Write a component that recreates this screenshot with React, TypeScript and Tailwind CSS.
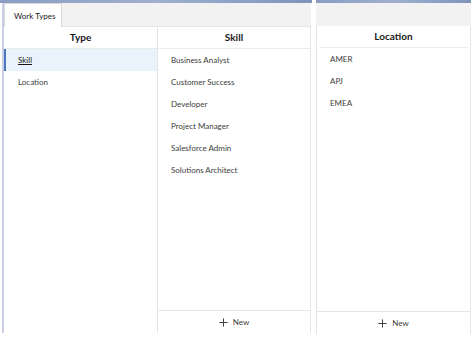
const skills = [
  "Business Analyst",
  "Customer Success",
  "Developer",
  "Project Manager",
  "Salesforce Admin",
  "Solutions Architect",
];

const locations = ["AMER", "APJ", "EMEA"];

const PlusIcon = () => (
  <svg width="9" height="9" viewBox="0 0 10 10" className="text-[#3e3e3c]">
    <path d="M5 0.5v9M0.5 5h9" stroke="currentColor" strokeWidth="1.1" />
  </svg>
);

const NewButton = () => (
  <div className="h-[22px] flex items-center justify-center gap-[5px] text-[8px] text-[#3e3e3c]">
    <PlusIcon />
    <span>New</span>
  </div>
);

const App = () => {
  return (
    <div
      className="w-[474px] h-[349px] bg-white flex overflow-hidden"
      style={{ fontFamily: "Lato, 'Open Sans', sans-serif" }}
    >
      {/* left window */}
      <div className="w-[312px] h-[333px] flex flex-col">
        <div className="h-[3px] bg-gradient-to-r from-[#8a9cc2] via-[#9fb0d0] to-[#7f93bb]" />
        <div className="flex-1 flex pl-[2px] pr-[1px]">
          <div className="w-[2px] bg-[#c9cde6]" />
          <div className="flex-1 flex flex-col">
            {/* tab bar */}
            <div className="h-[24px] bg-[#f3f2f2] flex border-b border-[#e5e5e5]">
              <div className="w-[58px] bg-white border-l border-t border-r border-[#dddbda] flex items-center pl-[9px] text-[8px] text-[#181818] -mb-px">
                Work Types
              </div>
            </div>
            <div className="flex-1 flex border-r border-[#e5e5e5]">
              {/* Type column */}
              <div className="w-[154px] flex flex-col border-r border-[#e5e5e5]">
                <div className="h-[22px] flex items-center justify-center text-[10px] font-bold text-[#181818] border-b border-[#ececec]">
                  Type
                </div>
                <div className="h-[22px] flex items-center bg-[#eaf3fc] border-l-[2px] border-[#4a79c0] pl-[12px] text-[8px] text-[#181818] underline">
                  Skill
                </div>
                <div className="h-[22px] flex items-center pl-[14px] text-[8px] text-[#3e3e3c]">
                  Location
                </div>
              </div>
              {/* Skill column */}
              <div className="flex-1 flex flex-col">
                <div className="h-[22px] flex items-center justify-center text-[10px] font-bold text-[#181818] border-b border-[#ececec]">
                  Skill
                </div>
                <div className="flex-1 flex flex-col">
                  {skills.map((s) => (
                    <div
                      key={s}
                      className="h-[22px] flex items-center pl-[13px] text-[8px] text-[#3e3e3c]"
                    >
                      {s}
                    </div>
                  ))}
                </div>
                <div className="border-t border-[#e5e5e5]">
                  <NewButton />
                </div>
              </div>
            </div>
          </div>
        </div>
      </div>

      {/* right window */}
      <div className="ml-[4px] w-[155px] h-[334px] flex flex-col">
        <div className="h-[3px] bg-gradient-to-r from-[#8a9cc2] via-[#9fb0d0] to-[#7f93bb]" />
        <div className="h-[23px] bg-[#f3f2f2]" />
        <div className="flex-1 flex flex-col border-l border-r border-[#e5e5e5]">
          <div className="h-[22px] flex items-center justify-center text-[10px] font-bold text-[#181818] border-b border-[#ececec] mx-[2px]">
            Location
          </div>
          <div className="flex-1 flex flex-col">
            {locations.map((l) => (
              <div
                key={l}
                className="h-[22px] flex items-center pl-[13px] text-[8px] text-[#3e3e3c]"
              >
                {l}
              </div>
            ))}
          </div>
          <div className="border-t border-[#e5e5e5]">
            <NewButton />
          </div>
        </div>
      </div>
    </div>
  );
};

export default App;
